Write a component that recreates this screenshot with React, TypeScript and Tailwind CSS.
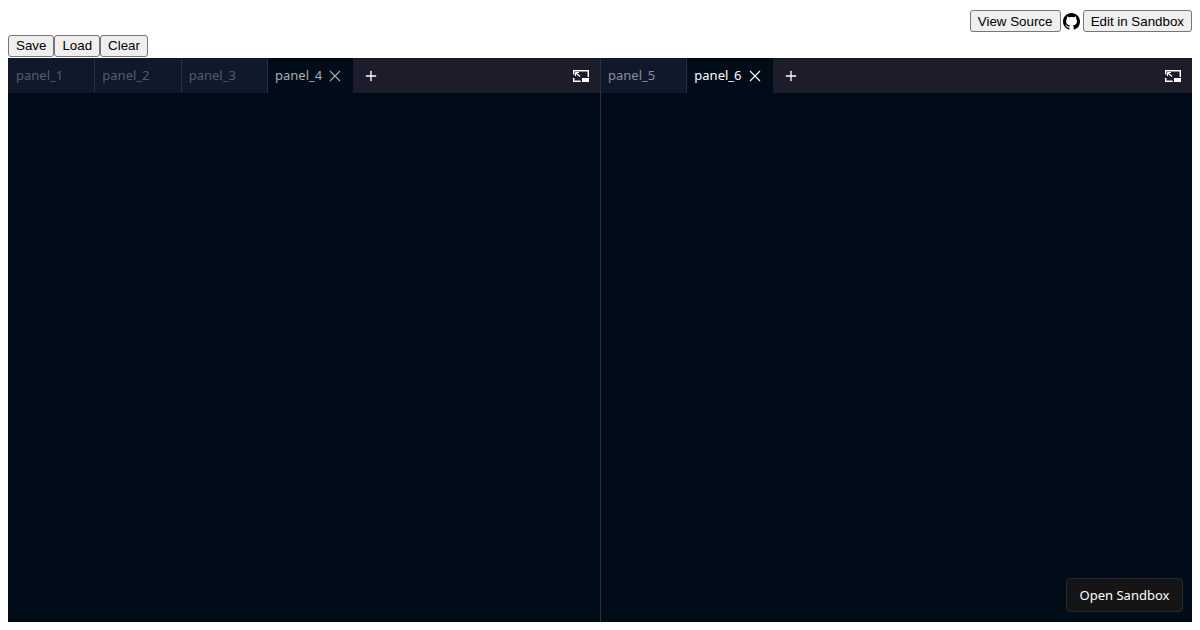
import { Plus } from "lucide-react";

const btn =
  "h-[22px] px-[7px] border border-[#767676] rounded-[3px] bg-[#efefef] text-[13.33px] leading-none text-black font-['Liberation_Sans',sans-serif]";

function ExpandIcon() {
  return (
    <svg width="16" height="12" viewBox="0 0 16 12" fill="none">
      <path d="M.7 4.5V.7h14.6V7M.7 8v3.3h7" stroke="#fff" strokeWidth="1.5" />
      <rect x="9" y="8" width="7" height="4" fill="#fff" />
      <path d="M3 3l4 3.5M2.5 2.5h3.5M2.5 2.5v3.5" stroke="#fff" strokeWidth="1.2" />
    </svg>
  );
}

function CloseIcon() {
  return (
    <svg width="12" height="12" viewBox="0 0 12 12" fill="none" stroke="currentColor" strokeWidth="1.1">
      <path d="M1 1l10 10M11 1L1 11" />
    </svg>
  );
}

function GithubIcon() {
  return (
    <svg width="16" height="16" viewBox="0 0 16 16" fill="#000" className="w-[17px] h-[17px]">
      <path d="M8 0C3.58 0 0 3.58 0 8c0 3.54 2.29 6.53 5.47 7.59.4.07.55-.17.55-.38 0-.19-.01-.82-.01-1.49-2.01.37-2.53-.49-2.69-.94-.09-.23-.48-.94-.82-1.13-.28-.15-.68-.52-.01-.53.63-.01 1.08.58 1.23.82.72 1.21 1.87.87 2.33.66.07-.52.28-.87.51-1.07-1.78-.2-3.64-.89-3.64-3.95 0-.87.31-1.59.82-2.15-.08-.2-.36-1.02.08-2.12 0 0 .67-.21 2.2.82.64-.18 1.32-.27 2-.27s1.36.09 2 .27c1.53-1.04 2.2-.82 2.2-.82.44 1.1.16 1.92.08 2.12.51.56.82 1.27.82 2.15 0 3.07-1.87 3.75-3.65 3.95.29.25.54.73.54 1.48 0 1.07-.01 1.93-.01 2.2 0 .21.15.46.55.38A8.01 8.01 0 0 0 16 8c0-4.42-3.58-8-8-8z" />
    </svg>
  );
}

function Tab({ name, state, first }: { name: string; state: "idle" | "hidden" | "active" | "focus"; first?: boolean }) {
  const edge = first ? "pl-2" : "pl-[7px] border-l border-[#2b2b4a]";
  if (state === "idle" || state === "hidden") {
    return (
      <div
        className={
          "w-[86.33px] shrink-0 flex items-center bg-[#10192c] " +
          edge +
          (state === "idle" ? " text-[#565b6a]" : " text-[#8b8e98]")
        }
      >
        {name}
      </div>
    );
  }
  return (
    <div
      className={
        "w-[86.33px] shrink-0 flex items-center gap-[7px] bg-[#000c18] " +
        edge +
        (state === "focus" ? " text-white" : " text-[#a9acb3]")
      }
    >
      {name}
      <CloseIcon />
    </div>
  );
}

function Group({ tabs, widthClass }: { tabs: React.ReactNode; widthClass: string }) {
  return (
    <div className={widthClass + " flex flex-col min-w-0"}>
      <div className="h-[35px] flex bg-[#1c1c2a] text-[13px] font-['Noto_Sans',sans-serif]">
        {tabs}
        <div className="w-9 flex items-center justify-center text-white">
          <Plus size={16} strokeWidth={2} />
        </div>
        <div className="ml-auto mr-[11px] flex items-center">
          <ExpandIcon />
        </div>
      </div>
      <div className="flex-1 bg-[#000c18]" />
    </div>
  );
}

export default function App() {
  return (
    <div className="h-[630px] px-2 pb-2 flex flex-col bg-white overflow-hidden">
      <div className="h-[35px] flex items-end justify-end gap-[2.5px] pb-[3px] shrink-0">
        <button className={btn + " pt-[2px] w-[91px] px-0"}>View Source</button>
        <span className="h-[22px] flex items-center"><GithubIcon /></span>
        <button className={btn + " pt-[2px]"}>Edit in Sandbox</button>
      </div>
      <div className="h-[23px] flex items-start shrink-0">
        <button className={btn}>Save</button>
        <button className={btn}>Load</button>
        <button className={btn}>Clear</button>
      </div>
      <div className="relative flex flex-1 min-h-0">
        <Group
          widthClass="w-[592px]"
          tabs={
            <>
              <Tab name="panel_1" state="idle" first />
              <Tab name="panel_2" state="idle" />
              <Tab name="panel_3" state="idle" />
              <Tab name="panel_4" state="active" />
            </>
          }
        />
        <Group
          widthClass="flex-1"
          tabs={
            <>
              <Tab name="panel_5" state="hidden" first />
              <Tab name="panel_6" state="focus" />
            </>
          }
        />
        <div className="absolute left-[592px] top-0 bottom-0 w-px bg-[#2b2b4a]" />
        <div className="absolute right-[9px] bottom-[10px] h-[34px] w-[117px] pt-[2px] flex items-center justify-center rounded border border-[#2a2a2e] bg-[#151515] text-white text-[13px] font-['Noto_Sans',sans-serif]">
          Open Sandbox
        </div>
      </div>
    </div>
  );
}
